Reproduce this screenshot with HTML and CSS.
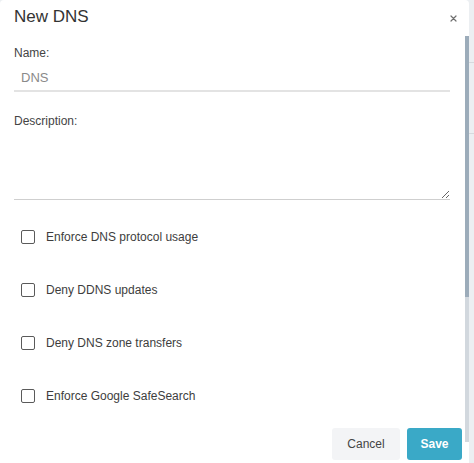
FILE: index.html
```html
<!DOCTYPE html>
<html>
<head>
<meta charset="utf-8">
<link rel="stylesheet" href="styles.css">
</head>
<body>
<div class="page">
  <div class="dialog">
    <div class="main">
      <div class="header">
        <h1 class="title">New DNS</h1>
        <svg class="close" width="7" height="7" viewBox="0 0 7 7"><path d="M1 1L6 6M6 1L1 6" stroke="#6f6f6f" stroke-width="1.2" stroke-linecap="round"/></svg>
      </div>
      <div class="form">
        <div class="label">Name:</div>
        <input class="input" type="text" value="DNS">
        <div class="label desc-label">Description:</div>
        <textarea class="textarea"></textarea>
        <div class="checks">
          <div class="check"><span class="box"></span><span class="check-text">Enforce DNS protocol usage</span></div>
          <div class="check"><span class="box"></span><span class="check-text">Deny DDNS updates</span></div>
          <div class="check"><span class="box"></span><span class="check-text">Deny DNS zone transfers</span></div>
          <div class="check"><span class="box"></span><span class="check-text">Enforce Google SafeSearch</span></div>
        </div>
      </div>
      <div class="footer">
        <button class="btn btn-cancel">Cancel</button>
        <button class="btn btn-save">Save</button>
      </div>
    </div>
    <div class="scrollbar">
      <div class="thumb"></div>
      <div class="track"></div>
    </div>
  </div>
  <div class="backdrop">
    <div class="bd-row bd-row1"></div>
    <div class="bd-row bd-row2"></div>
  </div>
</div>
</body>
</html>
```
FILE: styles.css
```css
html, body {
  margin: 0;
  padding: 0;
}
body {
  width: 474px;
  height: 463px;
  overflow: hidden;
  background: #eceff2;
  font-family: "Liberation Sans", Arial, sans-serif;
  color: #3b3b3b;
}
.page {
  display: flex;
  height: 463px;
}
.dialog {
  width: 469px;
  height: 463px;
  background: #ffffff;
  border-radius: 4px 4px 0 0;
  display: flex;
  flex-direction: row;
}
.main {
  flex: 1;
  display: flex;
  flex-direction: column;
}
.header {
  height: 36px;
  box-sizing: border-box;
  padding: 7px 8px 0 14px;
  display: flex;
  justify-content: space-between;
  align-items: flex-start;
}
.title {
  margin: 0;
  font-size: 17px;
  line-height: 20px;
  font-weight: normal;
  color: #333333;
}
.close {
  margin-top: 8px;
  display: block;
}
.form {
  padding: 9px 15px 0 14px;
  display: flex;
  flex-direction: column;
}
.label {
  font-size: 12px;
  line-height: 16px;
  color: #444444;
}
.desc-label {
  margin-top: 21px;
}
.input {
  display: block;
  box-sizing: border-box;
  width: 100%;
  height: 31px;
  margin: 0;
  padding: 8px 7px 5px;
  border: none;
  border-bottom: 2px solid #e3e3e3;
  font-family: "Liberation Sans", Arial, sans-serif;
  font-size: 13px;
  line-height: 16px;
  color: #8a8a8a;
  outline: none;
  background: transparent;
}
.textarea {
  display: block;
  box-sizing: border-box;
  width: 100%;
  height: 71px;
  margin: 0;
  padding: 4px 7px;
  border: none;
  border-bottom: 1px solid #cfcfcf;
  resize: vertical;
  font-family: "Liberation Sans", Arial, sans-serif;
  font-size: 13px;
  outline: none;
  background: transparent;
}
.checks {
  margin-top: 10px;
  display: flex;
  flex-direction: column;
}
.check {
  height: 53px;
  display: flex;
  align-items: center;
  padding-left: 7px;
}
.box {
  width: 14px;
  height: 14px;
  box-sizing: border-box;
  border: 1.5px solid #5a5a5a;
  border-radius: 2px;
  margin-right: 11px;
  flex: none;
}
.check-text {
  font-size: 12px;
  line-height: 16px;
  color: #3d3d3d;
}
.footer {
  margin-top: 6px;
  padding-right: 3px;
  display: flex;
  justify-content: flex-end;
  gap: 7px;
}
.btn {
  height: 32px;
  border: none;
  border-radius: 3px;
  font-family: "Liberation Sans", Arial, sans-serif;
  font-size: 12px;
  margin: 0;
  cursor: pointer;
}
.btn-cancel {
  width: 68px;
  background: #f3f4f6;
  color: #444444;
}
.btn-save {
  width: 55px;
  background: #3aa9c7;
  color: #ffffff;
  font-weight: bold;
}
.scrollbar {
  width: 4px;
  padding-top: 36px;
  display: flex;
  flex-direction: column;
}
.thumb {
  height: 261px;
  background: #9cacba;
}
.track {
  height: 145px;
  background: #d2d8de;
}
.backdrop {
  flex: 1;
  display: flex;
  flex-direction: column;
}
.bd-row1 {
  height: 62px;
  border-bottom: 1px solid #d6dade;
}
.bd-row2 {
  height: 70px;
  border-bottom: 1px solid #d6dade;
}
```
